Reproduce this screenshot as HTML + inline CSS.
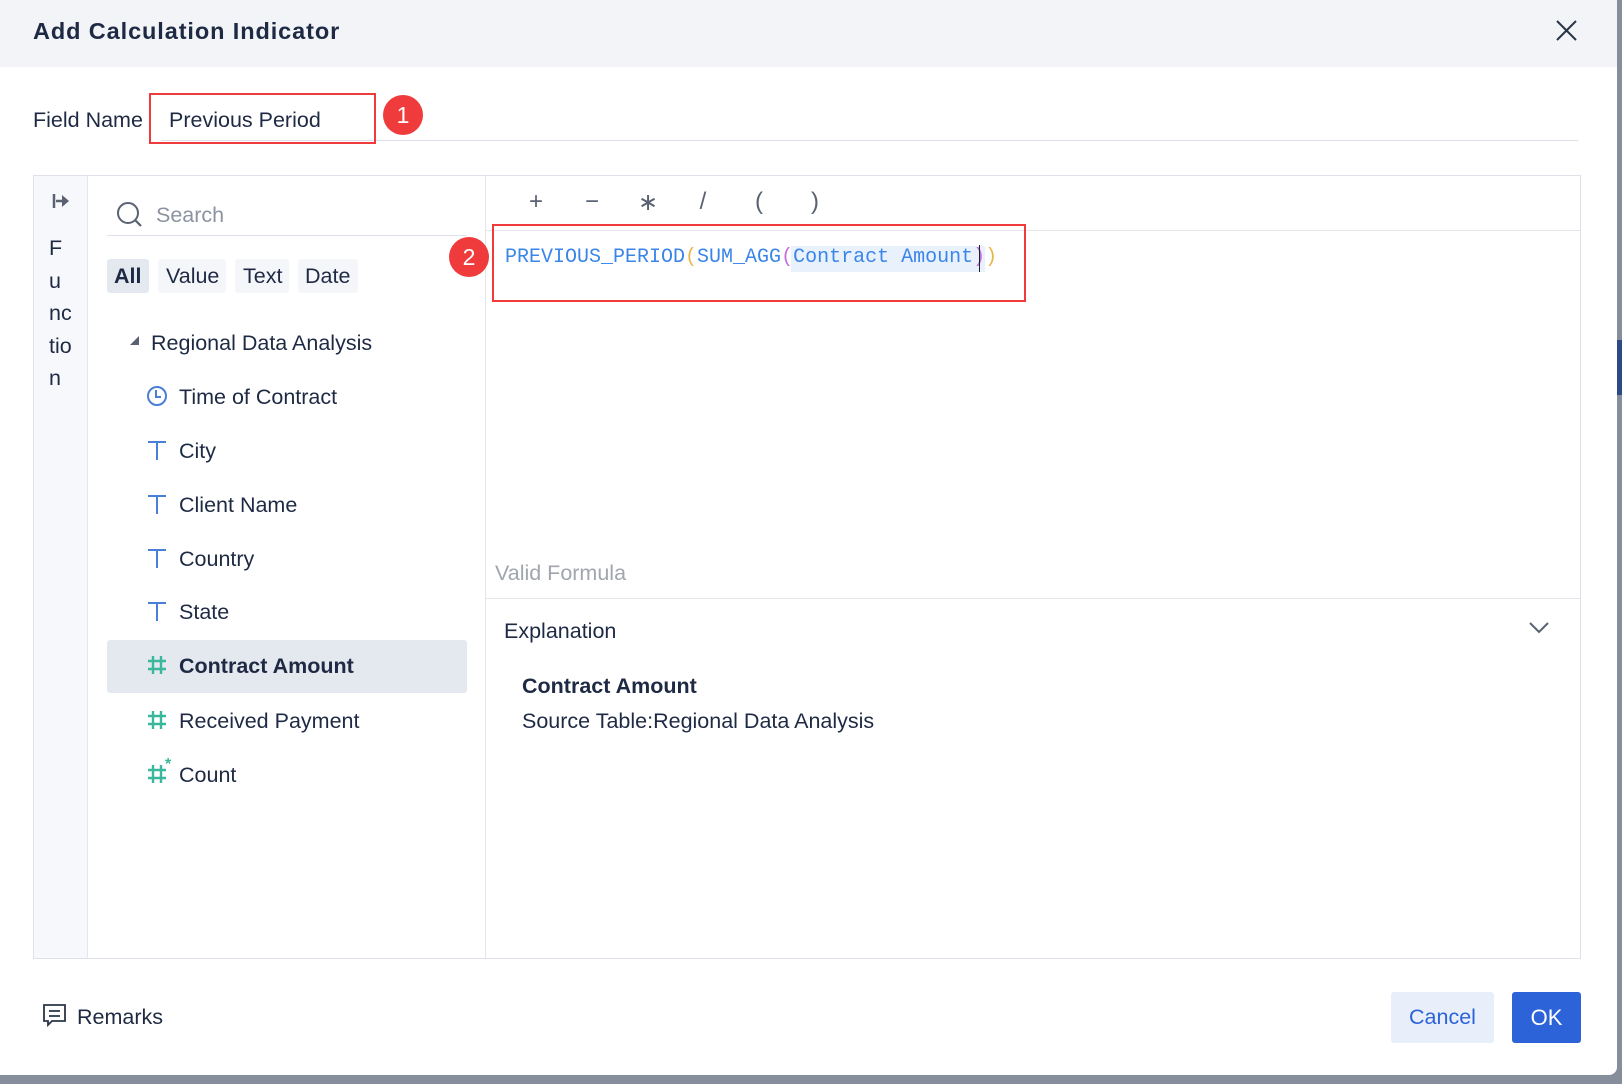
<!DOCTYPE html>
<html><head><meta charset="utf-8"><style>
*{margin:0;padding:0;box-sizing:border-box}
body{width:1622px;height:1084px;background:#868e9c;position:relative;overflow:hidden;font-family:"Liberation Sans",sans-serif;color:#1e2a44}
.dlg{position:absolute;left:0;top:0;width:1617px;height:1075px;background:#fff;border-radius:0 0 8px 0;overflow:hidden}
.hdr{position:absolute;left:0;top:0;width:100%;height:67px;background:#f2f4f7}
.a{position:absolute;white-space:nowrap}
.t{font-size:21.5px;line-height:26px}
.badge{position:absolute;width:40px;height:40px;border-radius:50%;background:#ef3b3b;color:#fff;font-size:23px;text-align:center;line-height:40px}
.op{position:absolute;top:188px;font-size:24px;color:#5a6272;width:20px;text-align:center}
.tT{position:absolute;left:147px;width:20px;height:20px}
</style></head><body>
<div class="dlg">
<div class="hdr"></div>
<div class="a" style="left:33px;top:17px;font-size:23.5px;font-weight:bold;color:#1e2a44;line-height:28px;letter-spacing:0.9px">Add Calculation Indicator</div>
<svg class="a" style="left:1556px;top:20px" width="21" height="21" viewBox="0 0 21 21"><path d="M1 1L20 20M20 1L1 20" stroke="#2a3547" stroke-width="2"/></svg>

<div class="a t" style="left:33px;top:107px">Field Name</div>
<div class="a" style="left:161px;top:140px;width:1417px;height:1px;background:#dfe1e8"></div>
<div class="a" style="left:149px;top:93px;width:227px;height:51px;border:2px solid #ef3b3b"></div>
<div class="a t" style="left:169px;top:107px">Previous Period</div>
<div class="badge" style="left:383px;top:95px">1</div>

<div class="a" style="left:33px;top:175px;width:1548px;height:784px;border:1px solid #dfe1e8"></div>
<div class="a" style="left:34px;top:176px;width:54px;height:782px;background:#f7f8fb;border-right:1px solid #e4e6ec"></div>
<svg class="a" style="left:52px;top:193px" width="20" height="16" viewBox="0 0 20 16"><path d="M2 1V15" stroke="#5a6272" stroke-width="2.5"/><path d="M4 8H11" stroke="#5a6272" stroke-width="2.5"/><path d="M10 2L17 8L10 14Z" fill="#5a6272"/></svg>
<div class="a" style="left:49px;top:232px;font-size:21.5px;line-height:32.5px;white-space:normal;width:30px">F<br>u<br>nc<br>tio<br>n</div>

<div class="a" style="left:485px;top:176px;width:1px;height:782px;background:#e4e6ec"></div>
<svg class="a" style="left:116px;top:201px" width="28" height="28" viewBox="0 0 28 28"><circle cx="12" cy="12" r="10" fill="none" stroke="#5a6272" stroke-width="2"/><path d="M19 19L25 25" stroke="#5a6272" stroke-width="2.2"/></svg>
<div class="a t" style="left:156px;top:202px;color:#8c93a0">Search</div>
<div class="a" style="left:107px;top:235px;width:360px;height:1px;background:#dfe1e8"></div>
<div class="a" style="left:107px;top:259px;width:42px;height:34px;background:#e4e8ef;border-radius:3px"></div>
<div class="a" style="left:158px;top:259px;width:68px;height:34px;background:#f5f6f9;border-radius:3px"></div>
<div class="a" style="left:235px;top:259px;width:54px;height:34px;background:#f5f6f9;border-radius:3px"></div>
<div class="a" style="left:298px;top:259px;width:60px;height:34px;background:#f5f6f9;border-radius:3px"></div>
<div class="a t" style="left:114px;top:263px;font-weight:bold">All</div>
<div class="a t" style="left:166px;top:263px">Value</div>
<div class="a t" style="left:243px;top:263px">Text</div>
<div class="a t" style="left:305px;top:263px">Date</div>

<svg class="a" style="left:130px;top:336px" width="10" height="10"><path d="M0 9H9V0Z" fill="#5a6272"/></svg>
<div class="a t" style="left:151px;top:330px">Regional Data Analysis</div>

<svg class="a" style="left:146px;top:385px" width="22" height="22" viewBox="0 0 22 22"><circle cx="11" cy="11" r="9" fill="none" stroke="#4a7fd6" stroke-width="2"/><path d="M10 5V12H15" fill="none" stroke="#4a7fd6" stroke-width="2"/></svg>
<div class="a t" style="left:179px;top:384px">Time of Contract</div>

<svg class="tT" style="top:440px" viewBox="0 0 20 20"><path d="M1 2H19M10 2V20" stroke="#4a7fd6" stroke-width="2"/></svg>
<div class="a t" style="left:179px;top:438px">City</div>
<svg class="tT" style="top:494px" viewBox="0 0 20 20"><path d="M1 2H19M10 2V20" stroke="#4a7fd6" stroke-width="2"/></svg>
<div class="a t" style="left:179px;top:492px">Client Name</div>
<svg class="tT" style="top:548px" viewBox="0 0 20 20"><path d="M1 2H19M10 2V20" stroke="#4a7fd6" stroke-width="2"/></svg>
<div class="a t" style="left:179px;top:546px">Country</div>
<svg class="tT" style="top:601px" viewBox="0 0 20 20"><path d="M1 2H19M10 2V20" stroke="#4a7fd6" stroke-width="2"/></svg>
<div class="a t" style="left:179px;top:599px">State</div>

<div class="a" style="left:107px;top:640px;width:360px;height:53px;background:#e4e8ef;border-radius:3px"></div>
<svg class="a" style="left:147px;top:655px" width="20" height="20" viewBox="0 0 20 20"><path d="M6 1V19M14 1V19M1 6H19M1 14H19" stroke="#3bb79c" stroke-width="2.4"/></svg>
<div class="a t" style="left:179px;top:653px;font-weight:bold">Contract Amount</div>
<svg class="a" style="left:147px;top:710px" width="20" height="20" viewBox="0 0 20 20"><path d="M6 1V19M14 1V19M1 6H19M1 14H19" stroke="#3bb79c" stroke-width="2.4"/></svg>
<div class="a t" style="left:179px;top:708px">Received Payment</div>
<svg class="a" style="left:147px;top:764px" width="20" height="20" viewBox="0 0 20 20"><path d="M6 1V19M14 1V19M1 6H19M1 14H19" stroke="#3bb79c" stroke-width="2.4"/></svg>
<div class="a" style="left:165px;top:756px;color:#3bb79c;font-size:16px;font-weight:bold">*</div>
<div class="a t" style="left:179px;top:762px">Count</div>

<div class="op" style="left:526px">+</div>
<div class="op" style="left:582px">−</div>
<div class="op" style="left:638px">∗</div>
<div class="op" style="left:693px">/</div>
<div class="op" style="left:749px">(</div>
<div class="op" style="left:805px">)</div>
<div class="a" style="left:486px;top:230px;width:1094px;height:1px;background:#e4e6ec"></div>

<div class="a" style="left:492px;top:224px;width:534px;height:78px;border:2px solid #ef3b3b"></div>
<div class="badge" style="left:449px;top:237px">2</div>
<div class="a" style="left:791px;top:246px;width:194px;height:26px;background:#e9f1fd"></div>
<div class="a" style="left:505px;top:245px;font-family:'Liberation Mono',monospace;font-size:20px;line-height:26px;color:#3a86e8">PREVIOUS_PERIOD<span style="color:#e6b84a">(</span>SUM_AGG<span style="color:#c46ee0">(</span>Contract Amount<span style="color:#c46ee0">)</span><span style="color:#e6b84a">)</span></div>
<div class="a" style="left:979px;top:245px;width:1px;height:27px;background:#222"></div>

<div class="a t" style="left:495px;top:560px;color:#a0a5ae">Valid Formula</div>
<div class="a" style="left:486px;top:598px;width:1094px;height:1px;background:#e4e6ec"></div>
<div class="a t" style="left:504px;top:618px">Explanation</div>
<svg class="a" style="left:1529px;top:622px" width="20" height="12" viewBox="0 0 20 12"><path d="M1 1L10 10L19 1" fill="none" stroke="#5a6272" stroke-width="2"/></svg>
<div class="a t" style="left:522px;top:673px;font-weight:bold">Contract Amount</div>
<div class="a t" style="left:522px;top:708px">Source Table:Regional Data Analysis</div>

<svg class="a" style="left:43px;top:1004px" width="23" height="24" viewBox="0 0 23 24"><path d="M1 1H22V17H9L5 21V17H1Z" fill="none" stroke="#2a3547" stroke-width="1.8"/><path d="M6 7H17M6 12H17" stroke="#2a3547" stroke-width="1.8"/></svg>
<div class="a t" style="left:77px;top:1004px">Remarks</div>

<div class="a" style="left:1391px;top:992px;width:103px;height:51px;background:#e8eefa;border-radius:3px;color:#2c63d8;font-size:21.5px;line-height:51px;text-align:center">Cancel</div>
<div class="a" style="left:1512px;top:992px;width:69px;height:51px;background:#2c63d8;border-radius:3px;color:#fff;font-size:22px;line-height:51px;text-align:center">OK</div>
</div>
<div class="a" style="left:1617px;top:340px;width:5px;height:55px;background:#2e4a86"></div>
</body></html>
